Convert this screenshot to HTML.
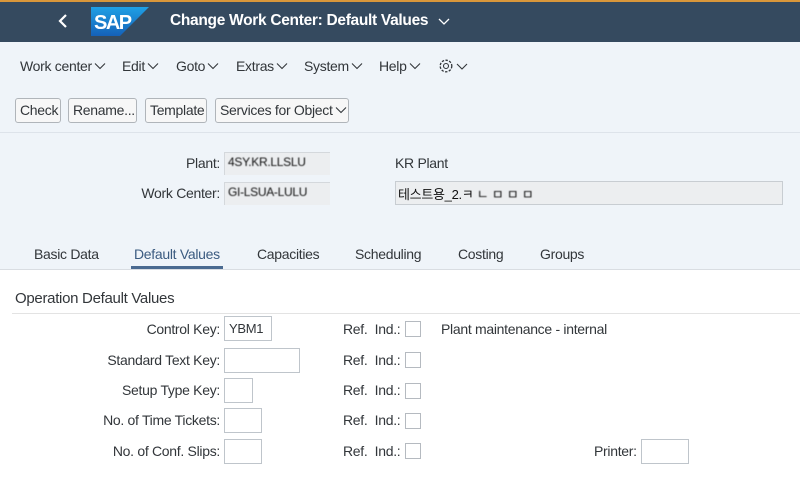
<!DOCTYPE html>
<html><head><meta charset="utf-8"><style>
*{margin:0;padding:0;box-sizing:border-box}
body{width:800px;height:501px;overflow:hidden;background:#fff;font-family:"Liberation Sans","Noto Sans CJK KR",sans-serif;font-size:14px;color:#32363a;position:relative;letter-spacing:-0.3px}
.a{position:absolute;white-space:nowrap}
.top{position:absolute;left:0;top:0;width:800px;height:2px;background:#d9973a}
.shell{position:absolute;left:0;top:2px;width:800px;height:40px;background:#354a5f}
.light{position:absolute;left:0;top:42px;width:800px;height:228px;background:#eff4f9}
.sep{position:absolute;left:0;top:132px;width:800px;height:1px;background:#dde3ea}
.btn{position:absolute;top:98px;height:25px;border:1px solid #b0b5ba;border-radius:3px;background:#f7f7f7;font-size:14px;line-height:23px;padding-left:4px;color:#32363a;white-space:nowrap}
.lbl{position:absolute;text-align:right;width:220px;left:0}
.inp{position:absolute;background:#fff;border:1px solid #bfc5cb}
.ro{position:absolute;background:#eceef0;border:1px solid #d4d8dc;border-right:none;border-bottom:none}
.cb{position:absolute;left:405px;width:16px;height:16px;border:1px solid #b5bac0;background:#fff}
.ref{position:absolute;left:343px}
.ch{display:inline-block;width:12px;height:8px;margin-left:2px;vertical-align:1px}
</style></head><body>
<svg width="0" height="0" style="position:absolute"><defs><symbol id="c" viewBox="0 0 12 8"><path d="M1 1.5 L6 6.5 L11 1.5" stroke="#32363a" stroke-width="1.1" fill="none"/></symbol></defs></svg>
<div class="top"></div>
<div class="shell"></div>
<svg class="a" style="left:56px;top:13px" width="14" height="16"><path d="M10 2 L4 8 L10 14" stroke="#fff" stroke-width="2.2" fill="none"/></svg>
<svg class="a" style="left:91px;top:7px" width="58" height="29"><defs><linearGradient id="g" x1="0" y1="0" x2="0" y2="1"><stop offset="0" stop-color="#1fa0e5"/><stop offset="1" stop-color="#1561b8"/></linearGradient></defs><path d="M0 0 H58 L29 29 H0 Z" fill="url(#g)"/><text x="3" y="22" font-family="Liberation Sans" font-weight="bold" font-size="20" fill="#fff" letter-spacing="-1.5">SAP</text></svg>
<div class="a" style="left:170px;top:12px;color:#fff;font-weight:bold;font-size:15.5px;letter-spacing:-0.3px">Change Work Center: Default Values</div>
<svg class="a" style="left:437px;top:17px" width="14" height="10"><path d="M2 2 L7 7 L12 2" stroke="#fff" stroke-width="1.3" fill="none"/></svg>
<div class="light"></div>
<div class="sep"></div>
<div class="a" style="left:20px;top:58px">Work center<svg class="ch"><use href="#c"/></svg></div>
<div class="a" style="left:122px;top:58px">Edit<svg class="ch"><use href="#c"/></svg></div>
<div class="a" style="left:176px;top:58px">Goto<svg class="ch"><use href="#c"/></svg></div>
<div class="a" style="left:236px;top:58px">Extras<svg class="ch"><use href="#c"/></svg></div>
<div class="a" style="left:304px;top:58px">System<svg class="ch"><use href="#c"/></svg></div>
<div class="a" style="left:379px;top:58px">Help<svg class="ch"><use href="#c"/></svg></div>
<svg class="a" style="left:438px;top:57px" width="32" height="18"><circle cx="8" cy="9" r="2.5" stroke="#32363a" fill="none" stroke-width="1.1"/><circle cx="8" cy="9" r="5.8" stroke="#32363a" fill="none" stroke-width="1.3" stroke-dasharray="2.4 1.4"/><path d="M19 7 L24 12 L29 7" stroke="#32363a" fill="none" stroke-width="1.1"/></svg>
<div class="btn" style="left:15px;width:46px">Check</div>
<div class="btn" style="left:68px;width:69px">Rename...</div>
<div class="btn" style="left:145px;width:62px">Template</div>
<div class="btn" style="left:215px;width:134px">Services for Object<svg class="ch"><use href="#c"/></svg></div>
<div class="lbl" style="top:155px">Plant:</div>
<div class="ro" style="left:224px;top:152px;width:106px;height:23px"></div>
<div class="a" style="left:228px;top:155px;font-size:12px;color:#111;filter:blur(0.6px)">4SY.KR.LLSLU</div>
<div class="a" style="left:395px;top:155px">KR Plant</div>
<div class="lbl" style="top:185px">Work Center:</div>
<div class="ro" style="left:224px;top:182px;width:106px;height:23px"></div>
<div class="a" style="left:228px;top:185px;font-size:12px;color:#111;filter:blur(0.6px)">GI-LSUA-LULU</div>
<div class="ro" style="left:395px;top:181px;width:388px;height:24px;border:1px solid #c8cdd2"></div>
<div class="a" style="left:398px;top:184px;font-size:13px;color:#111">테스트용_2.ㅋ <span style="filter:blur(0.6px)">ㄴ ㅁ ㅁ ㅁ</span></div>
<div class="a" style="left:34px;top:246px">Basic Data</div>
<div class="a" style="left:134px;top:246px;color:#3b5b80">Default Values</div>
<div class="a" style="left:131px;top:266px;width:92px;height:3px;background:#4a6a90"></div>
<div class="a" style="left:257px;top:246px">Capacities</div>
<div class="a" style="left:355px;top:246px">Scheduling</div>
<div class="a" style="left:458px;top:246px">Costing</div>
<div class="a" style="left:540px;top:246px">Groups</div>
<div class="a" style="left:0;top:269px;width:800px;height:1px;background:#d9dde2"></div>
<div class="a" style="left:15px;top:290px;font-size:15px">Operation Default Values</div>
<div class="a" style="left:12px;top:313px;width:788px;height:1px;background:#e3e3e3"></div>
<div class="lbl" style="top:321px">Control Key:</div>
<div class="inp" style="left:224px;top:316px;width:48px;height:25px"></div>
<div class="a" style="left:229px;top:321px;font-size:13px">YBM1</div>
<div class="ref" style="top:321px">Ref. &nbsp;Ind.:</div><div class="cb" style="top:321px"></div>
<div class="a" style="left:441px;top:321px">Plant maintenance - internal</div>
<div class="lbl" style="top:352px">Standard Text Key:</div>
<div class="inp" style="left:224px;top:348px;width:76px;height:25px"></div>
<div class="ref" style="top:352px">Ref. &nbsp;Ind.:</div><div class="cb" style="top:352px"></div>
<div class="lbl" style="top:382px">Setup Type Key:</div>
<div class="inp" style="left:224px;top:378px;width:29px;height:25px"></div>
<div class="ref" style="top:382px">Ref. &nbsp;Ind.:</div><div class="cb" style="top:383px"></div>
<div class="lbl" style="top:412px">No. of Time Tickets:</div>
<div class="inp" style="left:224px;top:408px;width:38px;height:25px"></div>
<div class="ref" style="top:412px">Ref. &nbsp;Ind.:</div><div class="cb" style="top:413px"></div>
<div class="lbl" style="top:443px">No. of Conf. Slips:</div>
<div class="inp" style="left:224px;top:439px;width:38px;height:25px"></div>
<div class="ref" style="top:443px">Ref. &nbsp;Ind.:</div><div class="cb" style="top:443px"></div>
<div class="a" style="left:594px;top:443px">Printer:</div>
<div class="inp" style="left:641px;top:439px;width:48px;height:25px"></div>
</body></html>
